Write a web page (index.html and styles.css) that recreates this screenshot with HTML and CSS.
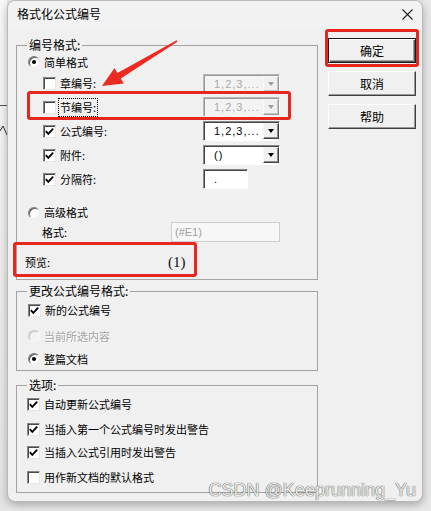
FILE: index.html
```html
<!DOCTYPE html>
<html>
<head>
    <meta charset="UTF-8">
    <title>格式化公式编号</title>
    <link rel="stylesheet" href="styles.css">
</head>
<body>
<div class="desk">
    <div class="desk-edge">
        <svg width="7" height="511" viewBox="0 0 7 511">
            <path d="M0 105.5 H7" stroke="#555" stroke-width="1"/>
            <path d="M0 131 L3 126 L7 135" stroke="#333" stroke-width="1" fill="none"/>
        </svg>
    </div>
    <div class="window">
        <div class="titlebar">
            <span class="title">格式化公式编号</span>
            <svg class="close" width="11" height="11" viewBox="0 0 11 11">
                <path d="M0.5 0.5 L10.5 10.5 M10.5 0.5 L0.5 10.5" stroke="#222" stroke-width="1.1"/>
            </svg>
        </div>
        <div class="dialog-body">
            <div class="groups">
                <fieldset class="group group-format">
                    <legend>编号格式:</legend>
                    <div class="row r-simple">
                        <span class="radio on"><i></i></span><span class="label">简单格式</span>
                    </div>
                    <div class="opt opt-first">
                        <div class="sub"><span class="check"></span><span class="label">章编号:</span></div>
                        <div class="combo disabled"><span class="combo-text">1,2,3,...</span><span class="combo-btn"><b></b></span></div>
                    </div>
                    <div class="opt">
                        <div class="sub"><span class="check"></span><span class="label focus">节编号:</span></div>
                        <div class="combo disabled"><span class="combo-text">1,2,3,...</span><span class="combo-btn"><b></b></span></div>
                    </div>
                    <div class="opt">
                        <div class="sub"><span class="check on"><svg viewBox="0 0 11 11"><path d="M1.8 5.2 L4.3 7.8 L9.2 2.6" fill="none" stroke="#000" stroke-width="1.9"/></svg></span><span class="label">公式编号:</span></div>
                        <div class="combo"><span class="combo-text">1,2,3,...</span><span class="combo-btn"><b></b></span></div>
                    </div>
                    <div class="opt">
                        <div class="sub"><span class="check on"><svg viewBox="0 0 11 11"><path d="M1.8 5.2 L4.3 7.8 L9.2 2.6" fill="none" stroke="#000" stroke-width="1.9"/></svg></span><span class="label">附件:</span></div>
                        <div class="combo"><span class="combo-text">()</span><span class="combo-btn"><b></b></span></div>
                    </div>
                    <div class="opt">
                        <div class="sub"><span class="check on"><svg viewBox="0 0 11 11"><path d="M1.8 5.2 L4.3 7.8 L9.2 2.6" fill="none" stroke="#000" stroke-width="1.9"/></svg></span><span class="label">分隔符:</span></div>
                        <div class="textbox sep">.</div>
                    </div>
                    <div class="row r-advanced">
                        <span class="radio"></span><span class="label">高级格式</span>
                    </div>
                    <div class="row r-pattern">
                        <span class="pattern-label">格式:</span>
                        <div class="textbox pattern disabled">(#E1)</div>
                    </div>
                    <div class="row r-preview">
                        <span class="preview-label">预览:</span>
                        <span class="preview-value">(1)</span>
                    </div>
                </fieldset>

                <fieldset class="group group-change">
                    <legend>更改公式编号格式:</legend>
                    <div class="row r22 first">
                        <span class="check on"><svg viewBox="0 0 11 11"><path d="M1.8 5.2 L4.3 7.8 L9.2 2.6" fill="none" stroke="#000" stroke-width="1.9"/></svg></span><span class="label">新的公式编号</span>
                    </div>
                    <div class="row r22 gap4">
                        <span class="radio disabled"></span><span class="label dim">当前所选内容</span>
                    </div>
                    <div class="row r22 gap1">
                        <span class="radio on"><i></i></span><span class="label">整篇文档</span>
                    </div>
                </fieldset>

                <fieldset class="group group-options">
                    <legend>选项:</legend>
                    <div class="row r22 first">
                        <span class="check on"><svg viewBox="0 0 11 11"><path d="M1.8 5.2 L4.3 7.8 L9.2 2.6" fill="none" stroke="#000" stroke-width="1.9"/></svg></span><span class="label">自动更新公式编号</span>
                    </div>
                    <div class="row r22 gap3">
                        <span class="check on"><svg viewBox="0 0 11 11"><path d="M1.8 5.2 L4.3 7.8 L9.2 2.6" fill="none" stroke="#000" stroke-width="1.9"/></svg></span><span class="label">当插入第一个公式编号时发出警告</span>
                    </div>
                    <div class="row r22 gap1">
                        <span class="check on"><svg viewBox="0 0 11 11"><path d="M1.8 5.2 L4.3 7.8 L9.2 2.6" fill="none" stroke="#000" stroke-width="1.9"/></svg></span><span class="label">当插入公式引用时发出警告</span>
                    </div>
                    <div class="row r22 gap3">
                        <span class="check"></span><span class="label">用作新文档的默认格式</span>
                    </div>
                </fieldset>
            </div>
            <div class="buttons">
                <button class="btn btn-default">确定</button>
                <button class="btn">取消</button>
                <button class="btn">帮助</button>
            </div>
        </div>

        <!-- annotations drawn over the dialog -->
        <div class="mark mark-section"></div>
        <div class="mark mark-ok"></div>
        <div class="mark mark-preview"></div>
        <svg class="mark-arrow" width="90" height="60" viewBox="0 0 90 60">
            <polygon points="7,51 28.8,48.4 25.8,43.4 82.4,6.7 81.6,5.3 22.4,38 19.5,33" fill="#ec2a22"/>
        </svg>
        <div class="watermark">CSDN @Keeprunning_Yu</div>
    </div>
</div>
</body>
</html>
```

FILE: styles.css
```css
body {
    margin: 0;
    background: #e8e8e8;
    font-family: "Noto Sans CJK SC", "Liberation Sans", sans-serif;
    color: #000;
}

.desk {
    display: flex;
    width: 431px;
    height: 511px;
    overflow: hidden;
}

.desk-edge {
    width: 7px;
    flex: none;
    background: linear-gradient(#f8f8f8, #ececec 60%, #e4e4e4);
}
.desk-edge svg {
    display: block;
}

.window {
    position: relative;
    flex: none;
    display: flex;
    flex-direction: column;
    width: 416px;
    height: 502px;
    box-sizing: border-box;
    border: 1px solid #b9b9b9;
    border-radius: 8px;
    background: #f0f0f0;
    box-shadow: 0 3px 9px rgba(0, 0, 0, .28);
}

.titlebar {
    height: 29px;
    display: flex;
    align-items: center;
    justify-content: space-between;
    padding: 0 9px 3px 9px;
    box-sizing: border-box;
    background: #f2f2f2;
    border-radius: 7px 7px 0 0;
}
.title {
    font-size: 12px;
    line-height: 14px;
}
.close {
    display: block;
}

.dialog-body {
    display: flex;
    gap: 10px;
    padding: 8px 6px 0 8px;
}

.groups {
    width: 302px;
    display: flex;
    flex-direction: column;
}

/* group boxes */
.group {
    margin: 0;
    min-width: 0;
    padding: 0 7px 0 8px;
    border: 1px solid #a3a3a3;
}
.group legend {
    margin-left: 2px;
    padding: 0 2px;
    font-size: 12px;
    line-height: 14px;
}

.group-format {
    padding-bottom: 7px;
}
.group-change {
    margin-top: 4px;
    padding-top: 1px;
}
.group-options {
    margin-top: 7px;
    padding-top: 1px;
    padding-bottom: 4px;
}

.row {
    display: flex;
    align-items: center;
}
.r22 {
    height: 22px;
}
.gap1 { margin-top: 1px; }
.gap3 { margin-top: 3px; }
.gap4 { margin-top: 4px; }

.group-change .row {
    padding-left: 3px;
}
.group-options .row {
    padding-left: 2px;
}

.label {
    margin-left: 2px;
    padding: 0 1px;
    border: 1px solid transparent;
    font-size: 11px;
    line-height: 15px;
    white-space: nowrap;
}
.label.focus {
    border: 1px dotted #000;
    padding: 1px 1px;
}
.label.dim {
    color: #a2a2a2;
    text-shadow: 1px 1px 0 #fff;
}

/* simple format block */
.r-simple {
    height: 20px;
    padding-left: 3px;
}
.opt {
    height: 24px;
    display: flex;
    align-items: center;
}
.opt-first {
    height: 23px;
}
.opt .sub {
    width: 178px;
    display: flex;
    align-items: center;
    padding-left: 18px;
    box-sizing: border-box;
}
.r-advanced {
    height: 19px;
    margin-top: 12px;
    padding-left: 3px;
}
.r-pattern {
    height: 20px;
}
.pattern-label {
    width: 146px;
    padding-left: 17px;
    box-sizing: border-box;
    font-size: 11px;
}
.r-preview {
    height: 20px;
    margin-top: 10px;
}
.preview-label {
    width: 143px;
    font-size: 11px;
}
.preview-value {
    font-family: "Liberation Serif", serif;
    font-size: 15px;
    line-height: 18px;
    color: #111;
}

/* check boxes and radios */
.check {
    flex: none;
    width: 13px;
    height: 13px;
    box-sizing: border-box;
    background: #fff;
    border: 1px solid;
    border-color: #858585 #e6e6e6 #e6e6e6 #858585;
    box-shadow: inset 1px 1px 0 #4a4a4a;
}
.check svg {
    display: block;
    width: 11px;
    height: 11px;
}

.radio {
    flex: none;
    position: relative;
    width: 12px;
    height: 12px;
    box-sizing: border-box;
    border-radius: 50%;
    background: #fff;
    border: 1px solid;
    border-color: #7c7c7c #ececec #ececec #7c7c7c;
    box-shadow: inset 1px 1px 0 #5a5a5a;
}
.radio i {
    position: absolute;
    left: 3px;
    top: 3px;
    width: 4px;
    height: 4px;
    border-radius: 50%;
    background: #000;
}
.radio.disabled {
    background: #f4f4f4;
    border-color: #c4c4c4 #f8f8f8 #f8f8f8 #c4c4c4;
    box-shadow: inset 1px 1px 0 #d0d0d0;
}

/* combo boxes and edits */
.combo {
    display: flex;
    width: 77px;
    height: 20px;
    box-sizing: border-box;
    border: 1px solid;
    border-color: #8a8a8a #fff #fff #8a8a8a;
    box-shadow: inset 1px 1px 0 #454545;
    background: #fff;
}
.combo-text {
    flex: 1;
    padding-left: 10px;
    font-family: "Liberation Sans", sans-serif;
    font-size: 11px;
    letter-spacing: 1px;
    line-height: 18px;
}
.combo-btn {
    width: 16px;
    margin: 1px 0 1px 0;
    box-sizing: border-box;
    display: flex;
    align-items: center;
    justify-content: center;
    background: #f0f0f0;
    border: 1px solid;
    border-color: #f8f8f8 #404040 #404040 #f8f8f8;
    box-shadow: inset -1px -1px 0 #8a8a8a;
}
.combo-btn b {
    width: 0;
    height: 0;
    border-left: 3.5px solid transparent;
    border-right: 3.5px solid transparent;
    border-top: 4px solid #000;
}
.combo.disabled {
    background: #f3f3f3;
    border-color: #b8b8b8 #fff #fff #b8b8b8;
    box-shadow: inset 1px 1px 0 #9a9a9a;
}
.combo.disabled .combo-text {
    color: #a8a8a8;
}
.combo.disabled .combo-btn {
    border-color: #f8f8f8 #9a9a9a #9a9a9a #f8f8f8;
    box-shadow: inset -1px -1px 0 #c4c4c4;
}
.combo.disabled .combo-btn b {
    border-top-color: #a0a0a0;
}

.textbox {
    height: 20px;
    box-sizing: border-box;
    border: 1px solid;
    border-color: #8a8a8a #fff #fff #8a8a8a;
    box-shadow: inset 1px 1px 0 #454545;
    background: #fff;
    font-family: "Liberation Sans", sans-serif;
    font-size: 11px;
    line-height: 18px;
}
.textbox.sep {
    width: 45px;
    padding-left: 10px;
}
.textbox.pattern {
    width: 109px;
    padding-left: 3px;
}
.textbox.disabled {
    background: #f7f7f7;
    border: 1px solid #cfcfcf;
    box-shadow: none;
    color: #a0a0a0;
}

/* push buttons */
.buttons {
    width: 88px;
    display: flex;
    flex-direction: column;
    gap: 8px;
}
.btn {
    height: 25px;
    margin: 0;
    padding: 0;
    box-sizing: border-box;
    background: #f0f0f0;
    border: 1px solid;
    border-color: #fdfdfd #404040 #404040 #fdfdfd;
    box-shadow: inset -1px -1px 0 #999;
    font-family: "Noto Sans CJK SC", sans-serif;
    font-size: 12px;
    line-height: 14px;
    color: #000;
}
.btn-default {
    border-color: #1a1a1a;
    box-shadow: inset 1px 1px 0 #fff, inset -1px -1px 0 #555, inset -2px -2px 0 #a0a0a0;
}

/* red annotations */
.mark {
    position: absolute;
    box-sizing: border-box;
    border: 3px solid #e7261f;
    border-radius: 3px;
}
.mark-section {
    left: 19px;
    top: 90px;
    width: 264px;
    height: 29px;
}
.mark-ok {
    left: 317px;
    top: 28px;
    width: 94px;
    height: 38px;
}
.mark-preview {
    left: 5px;
    top: 241px;
    width: 184px;
    height: 35px;
}
.mark-arrow {
    position: absolute;
    left: 87px;
    top: 34px;
}

.watermark {
    position: absolute;
    right: 6px;
    top: 478px;
    font-family: "Liberation Sans", sans-serif;
    font-size: 18px;
    line-height: 22px;
    color: #ececec;
    text-shadow: 0 0 1px rgba(0, 0, 0, .8), 0 0 1px rgba(0, 0, 0, .4);
    white-space: nowrap;
}
```
